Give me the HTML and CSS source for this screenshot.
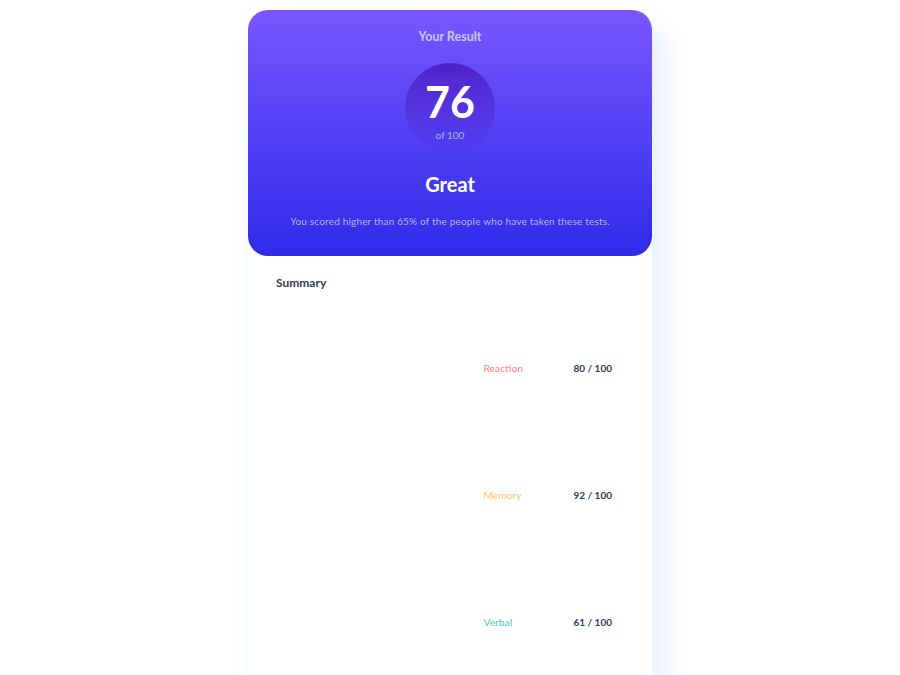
FILE: index.html
```html
<!DOCTYPE html>
<html lang="en">
<head>
<meta charset="utf-8">
<title>Results summary</title>
<link rel="stylesheet" href="styles.css">
</head>
<body>
<main class="card">
  <section class="result">
    <h1 class="result-title">Your Result</h1>
    <div class="score-circle">
      <span class="score">76</span>
      <span class="score-of">of 100</span>
    </div>
    <h2 class="grade">Great</h2>
    <p class="result-text">You scored higher than 65% of the people who have taken these tests.</p>
  </section>
  <section class="summary">
    <h2 class="summary-title">Summary</h2>
    <ul class="summary-list">
      <li class="summary-item"><span class="label reaction">Reaction</span><span class="value">80 / 100</span></li>
      <li class="summary-item"><span class="label memory">Memory</span><span class="value">92 / 100</span></li>
      <li class="summary-item"><span class="label verbal">Verbal</span><span class="value">61 / 100</span></li>
    </ul>
  </section>
</main>
</body>
</html>
```
FILE: styles.css
```css
* { box-sizing: border-box; }
html, body { margin: 0; padding: 0; }
body {
  background: #ffffff;
  font-family: "Lato", "Inter", "Liberation Sans", sans-serif;
  overflow: hidden;
  height: 675px;
}
.card {
  width: 404px;
  margin: 10px auto 0;
  background: #ffffff;
  border-radius: 20px 20px 0 0;
  box-shadow: 12px 20px 24px 6px hsl(221, 100%, 96%);
  height: 665px;
}
.result {
  height: 246px;
  border-radius: 20px;
  background: linear-gradient(to bottom, hsl(252, 100%, 67%), hsl(241, 81%, 54%));
  display: flex;
  flex-direction: column;
  align-items: center;
  padding-top: 19px;
}
.result-title {
  margin: 0;
  font-size: 12.5px;
  font-weight: 700;
  color: hsl(241, 100%, 89%);
  line-height: 16px;
}
.score-circle {
  margin-top: 18px;
  width: 90px;
  height: 90px;
  border-radius: 50%;
  background: linear-gradient(to bottom, hsla(256, 72%, 46%, 1), hsla(241, 72%, 46%, 0));
  display: flex;
  flex-direction: column;
  align-items: center;
  padding-top: 16px;
}
.score {
  font-size: 43px;
  font-weight: 700;
  color: #ffffff;
  line-height: 46px;
}
.score-of {
  margin-top: 4px;
  font-size: 10px;
  color: hsl(241, 100%, 89%);
  opacity: 0.8;
  line-height: 12px;
}
.grade {
  margin: 19px 0 0;
  font-size: 20px;
  font-weight: 700;
  color: #ffffff;
  line-height: 24px;
}
.result-text {
  margin: 18px 0 0;
  font-size: 10px;
  letter-spacing: 0.18px;
  color: hsl(241, 100%, 89%);
  opacity: 0.85;
  line-height: 14px;
}
.summary {
  padding: 19px 40px 0 28px;
}
.summary-title {
  margin: 0;
  font-size: 12px;
  font-weight: 700;
  color: hsl(224, 30%, 27%);
  line-height: 16px;
}
.summary-list {
  list-style: none;
  margin: 13px 0 0;
  padding: 0;
}
.summary-item {
  height: 127px;
  display: flex;
  align-items: center;
  justify-content: flex-end;
  font-size: 10px;
  line-height: 12px;
}
.label {
  width: 90px;
  font-size: 10.3px;
  opacity: 0.75;
}
.value {
  font-weight: 700;
  color: hsl(224, 30%, 27%);
}
.reaction { color: hsl(0, 100%, 67%); }
.memory { color: hsl(39, 100%, 56%); }
.verbal { color: hsl(166, 100%, 37%); }
```
